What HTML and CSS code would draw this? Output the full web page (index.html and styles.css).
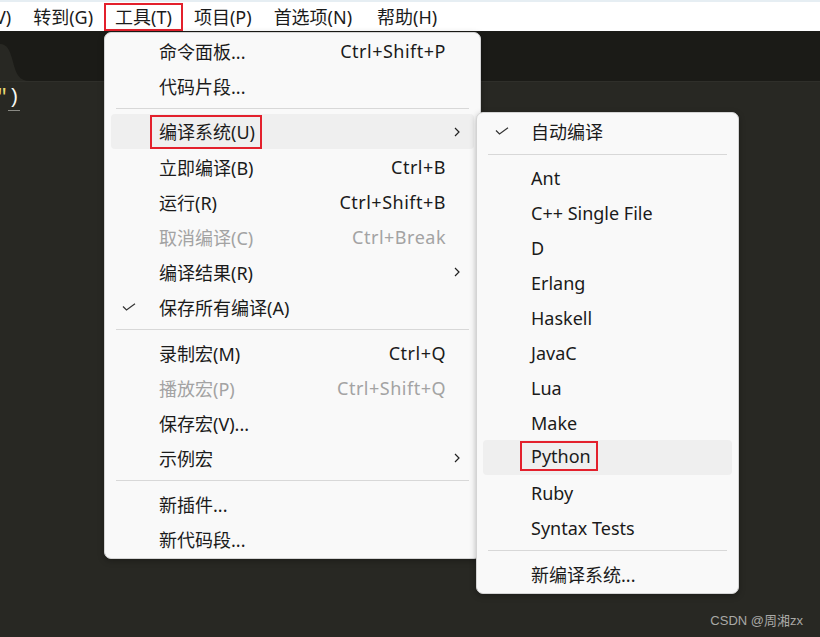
FILE: index.html
```html
<!DOCTYPE html>
<html lang="zh-CN">
<head>
<meta charset="utf-8">
<title>Sublime Text - 工具</title>
<link rel="stylesheet" href="styles.css">
</head>
<body>
<div class="window">
  <div class="menubar">
    <span class="mb-item mb-cut">V)</span>
    <span class="mb-item">转到(G)</span>
    <span class="mb-item mb-active"><span class="mark">工具(T)</span></span>
    <span class="mb-item">项目(P)</span>
    <span class="mb-item">首选项(N)</span>
    <span class="mb-item mb-last">帮助(H)</span>
  </div>
  <div class="tabbar">
    <svg class="tab-edge" width="30" height="51" viewBox="0 0 30 51"><path d="M0 14 C7 14 10 20 13 32 C16 44 19 51 30 51 L0 51 Z" fill="#282823"/></svg>
  </div>
  <div class="editor">
    <div class="code-line"><span class="str">"</span><span class="paren">)</span></div>
  </div>

  <div class="menu main-menu">
    <div class="row"><span class="chk"></span><span class="label">命令面板...</span><span class="key">Ctrl+Shift+P</span><span class="arr"></span></div>
    <div class="row"><span class="chk"></span><span class="label">代码片段...</span><span class="key"></span><span class="arr"></span></div>
    <div class="sep"></div>
    <div class="row hover"><span class="chk"></span><span class="label"><span class="mark mark-row">编译系统(U)</span></span><span class="key"></span><span class="arr"><svg width="6" height="10" viewBox="0 0 6 10"><polyline points="1,1 5,5 1,9" fill="none" stroke="#222" stroke-width="1.2"/></svg></span></div>
    <div class="row"><span class="chk"></span><span class="label">立即编译(B)</span><span class="key">Ctrl+B</span><span class="arr"></span></div>
    <div class="row"><span class="chk"></span><span class="label">运行(R)</span><span class="key">Ctrl+Shift+B</span><span class="arr"></span></div>
    <div class="row disabled"><span class="chk"></span><span class="label">取消编译(C)</span><span class="key">Ctrl+Break</span><span class="arr"></span></div>
    <div class="row"><span class="chk"></span><span class="label">编译结果(R)</span><span class="key"></span><span class="arr"><svg width="6" height="10" viewBox="0 0 6 10"><polyline points="1,1 5,5 1,9" fill="none" stroke="#222" stroke-width="1.2"/></svg></span></div>
    <div class="row"><span class="chk"><svg width="14" height="8" viewBox="0 0 14 8"><polyline points="1,3.5 4.5,7 13,0.8" fill="none" stroke="#333" stroke-width="1.2"/></svg></span><span class="label">保存所有编译(A)</span><span class="key"></span><span class="arr"></span></div>
    <div class="sep"></div>
    <div class="row"><span class="chk"></span><span class="label">录制宏(M)</span><span class="key">Ctrl+Q</span><span class="arr"></span></div>
    <div class="row disabled"><span class="chk"></span><span class="label">播放宏(P)</span><span class="key">Ctrl+Shift+Q</span><span class="arr"></span></div>
    <div class="row"><span class="chk"></span><span class="label">保存宏(V)...</span><span class="key"></span><span class="arr"></span></div>
    <div class="row"><span class="chk"></span><span class="label">示例宏</span><span class="key"></span><span class="arr"><svg width="6" height="10" viewBox="0 0 6 10"><polyline points="1,1 5,5 1,9" fill="none" stroke="#222" stroke-width="1.2"/></svg></span></div>
    <div class="sep"></div>
    <div class="row"><span class="chk"></span><span class="label">新插件...</span><span class="key"></span><span class="arr"></span></div>
    <div class="row"><span class="chk"></span><span class="label">新代码段...</span><span class="key"></span><span class="arr"></span></div>
  </div>

  <div class="menu sub-menu">
    <div class="row"><span class="chk chk-sub"><svg width="14" height="8" viewBox="0 0 14 8"><polyline points="1,3.5 4.5,7 13,0.8" fill="none" stroke="#333" stroke-width="1.2"/></svg></span><span class="label">自动编译</span></div>
    <div class="sep sep-sub"></div>
    <div class="row"><span class="chk"></span><span class="label">Ant</span></div>
    <div class="row"><span class="chk"></span><span class="label">C++ Single File</span></div>
    <div class="row"><span class="chk"></span><span class="label">D</span></div>
    <div class="row"><span class="chk"></span><span class="label">Erlang</span></div>
    <div class="row"><span class="chk"></span><span class="label">Haskell</span></div>
    <div class="row"><span class="chk"></span><span class="label">JavaC</span></div>
    <div class="row"><span class="chk"></span><span class="label">Lua</span></div>
    <div class="row"><span class="chk"></span><span class="label">Make</span></div>
    <div class="row hover"><span class="chk"></span><span class="label"><span class="mark mark-py">Python</span></span></div>
    <div class="row"><span class="chk"></span><span class="label">Ruby</span></div>
    <div class="row"><span class="chk"></span><span class="label">Syntax Tests</span></div>
    <div class="sep"></div>
    <div class="row"><span class="chk"></span><span class="label">新编译系统...</span></div>
  </div>

  <div class="watermark">CSDN @周湘zx</div>
</div>
</body>
</html>
```
FILE: styles.css
```css
* { box-sizing: border-box; }
html, body { margin: 0; padding: 0; }
body {
  width: 820px;
  height: 637px;
  overflow: hidden;
  background: #282823;
  font-family: "Noto Sans", "Noto Sans CJK SC", sans-serif;
  color: #1b1b1b;
}
.window {
  position: relative;
  width: 820px;
  height: 637px;
  display: flex;
  flex-direction: column;
}
.menubar {
  height: 31px;
  background: #ffffff;
  border-top: 2px solid #e6eef3;
  display: flex;
  align-items: center;
  font-size: 18px;
  white-space: nowrap;
}
.mb-item {
  padding: 0 11px;
  line-height: 26px;
}
.mb-cut { margin-left: -16px; padding-right: 11px; }
.mb-active { padding: 0; }
.mb-active .mark {
  display: inline-block;
  padding: 0 9px;
  border: 2px solid #e3202c;
  line-height: 24px;
}
.mb-last { padding-left: 14px; }
.tabbar {
  height: 51px;
  background: #1b1b17;
  border-bottom: 1px solid #2f2f2a;
  display: flex;
  align-items: flex-end;
}
.tab-edge { display: block; }
.editor {
  flex: 1;
  background: #282823;
  padding-top: 4px;
}
.code-line {
  font-family: "Liberation Mono", monospace;
  font-size: 20px;
  line-height: 24px;
  margin-left: -4px;
  color: #f8f8f2;
}
.str { color: #e6db74; }
.paren {
  display: inline-block;
  border-bottom: 1px solid #8a8a84;
  line-height: 23px;
  padding: 0 0 1px;
}
.menu {
  position: absolute;
  background: #f9f9f9;
  border: 1px solid #d4d4d4;
  border-radius: 7px;
  box-shadow: 0 2px 6px rgba(0, 0, 0, 0.28);
  padding: 0 6px 2px;
  font-size: 18px;
  white-space: nowrap;
}
.main-menu { left: 104px; top: 32px; width: 377px; }
.sub-menu { left: 476px; top: 112px; width: 263px; }
.row {
  height: 35px;
  display: flex;
  align-items: center;
  border-radius: 4px;
}
.row.hover { background: #efefef; }
.row.disabled { color: #a3a3a3; }
.chk {
  width: 48px;
  flex: none;
  display: flex;
  align-items: center;
  padding-left: 11px;
}
.chk-sub { padding-left: 12px; }
.chk svg { display: block; }
.label { flex: 1; }
.key { letter-spacing: 0.5px; }
.arr {
  width: 28px;
  flex: none;
  display: flex;
  align-items: center;
  padding-left: 8px;
}
.arr svg { display: block; }
.mark {
  display: inline-block;
  border: 2px solid #e3202c;
}
.mark-row {
  margin-left: -9px;
  padding: 0 5px 0 7px;
  line-height: 30px;
}
.mark-py {
  margin-left: -11px;
  padding: 0 5px 0 9px;
  line-height: 26px;
  position: relative;
  top: -2px;
}
.sep {
  height: 11px;
  display: flex;
  align-items: center;
  padding: 0 5px;
}
.sep-sub { height: 12px; }
.sep::before {
  content: "";
  flex: 1;
  height: 1px;
  background: #d8d8d8;
}
.watermark {
  position: absolute;
  right: 17px;
  bottom: 8px;
  font-family: "Liberation Sans", "Noto Sans CJK SC", sans-serif;
  font-size: 13px;
  color: #a9a9a6;
}
```
